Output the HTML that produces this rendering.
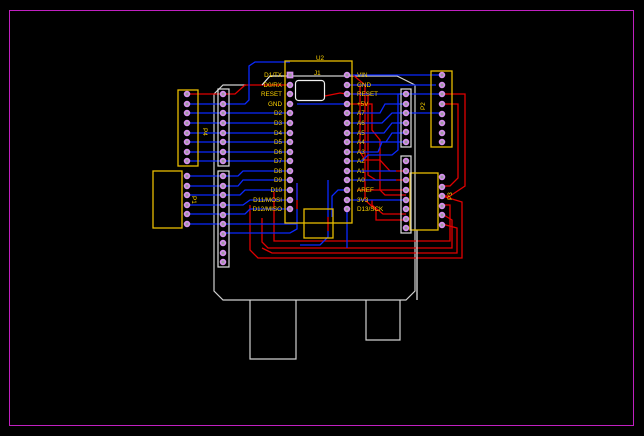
<!DOCTYPE html>
<html><head><style>
html,body{margin:0;padding:0;background:#000;}
svg{display:block}
text{font-family:"Liberation Sans",sans-serif;font-size:6.3px;fill:#ffd400;}
</style></head><body>
<svg width="644" height="436" viewBox="0 0 644 436" xmlns="http://www.w3.org/2000/svg">
<rect x="0" y="0" width="644" height="436" fill="#000"/>
<rect x="9.5" y="10.5" width="624" height="415" fill="none" stroke="#c020c0" stroke-width="1"/>

<g fill="none" stroke="#d0d0d0" stroke-width="1.2">
<polyline points="246,85 223,85 214,94 214,291 223,300 406,300 415,291 415,85 397,76 285,76"/>
<polyline points="250,300 250,359 296,359 296,300"/>
<polyline points="366,300 366,340 400,340 400,300"/>
</g>

<g fill="none" stroke="#e00000" stroke-width="1.3">
<polyline points="187,94 235,94 245,85 290,85"/>
<polyline points="442,104 458,104 458,178 450,186 442,186"/>
<polyline points="442,94 465,94 465,186 450,196 442,196"/>
<polyline points="442,205 450,205 450,241 274,241 274,192"/>
<polyline points="442,214 452,220 452,248 268,248 262,242 262,218"/>
<polyline points="442,224 457,228 457,253 272,253 262,248"/>
<polyline points="442,196 462,202 462,258 258,258 250,250 250,205"/>
<polyline points="347,85 360,85 360,152 365,160 380,160 390,171 406,171"/>
<polyline points="347,94 368,94 368,175 376,180 406,180"/>
<polyline points="347,104 372,104 372,130 380,140 380,190 385,195 406,195"/>
<polyline points="357,190 406,190"/>
<polyline points="372,200 372,205 383,214 406,214"/>
<polyline points="353,75 365,85 365,200 376,210 376,220 406,220"/>
<polyline points="325,96 340,93 347,94"/>
<line x1="297" y1="183" x2="297" y2="209"/>
<line x1="328" y1="217" x2="328" y2="231"/>
</g>

<g fill="none" stroke="#0a28ff" stroke-width="1.3">
<polyline points="223,104 245,104 249,100 249,66 255,62 290,62"/>
<line x1="187" y1="104" x2="223" y2="104"/>
<line x1="187" y1="113" x2="290" y2="113"/>
<line x1="187" y1="123" x2="290" y2="123"/>
<line x1="187" y1="133" x2="290" y2="133"/>
<line x1="187" y1="142" x2="290" y2="142"/>
<line x1="187" y1="152" x2="290" y2="152"/>
<line x1="187" y1="161" x2="290" y2="161"/>
<line x1="187" y1="176" x2="223" y2="176"/>
<line x1="187" y1="186" x2="223" y2="186"/>
<line x1="187" y1="195" x2="223" y2="195"/>
<line x1="187" y1="205" x2="223" y2="205"/>
<line x1="187" y1="214" x2="223" y2="214"/>
<line x1="187" y1="224" x2="297" y2="224"/>
<polyline points="223,176 238,176 243,171 290,171"/>
<polyline points="223,186 238,186 243,180 290,180"/>
<polyline points="223,195 240,195 245,190 290,190"/>
<polyline points="223,205 243,205 250,200 290,200"/>
<polyline points="223,214 245,214 250,209 290,209"/>
<polyline points="297,183 297,200"/>
<polyline points="223,233 290,233 297,229 297,209"/>
<polyline points="328,180 328,217"/>
<polyline points="300,245 320,245 328,237 328,231"/>
<polyline points="297,104 347,104"/>
<polyline points="347,75 442,75"/>
<polyline points="347,85 436,85"/>
<polyline points="347,94 442,94"/>
<polyline points="347,113 380,113 385,104 406,104"/>
<polyline points="347,123 382,123 392,113 406,113"/>
<polyline points="347,133 384,133 392,123 406,123"/>
<polyline points="347,142 386,142 392,133 406,133"/>
<polyline points="347,152 378,152 382,142 406,142"/>
<polyline points="347,161 362,161 368,155 392,155 398,150 398,94 406,94"/>
<polyline points="347,171 396,171"/>
<polyline points="347,180 396,180"/>
<polyline points="347,200 406,200"/>
<polyline points="347,190 338,190 332,196 332,217"/>
<line x1="347" y1="209" x2="347" y2="248"/>
<line x1="406" y1="113" x2="442" y2="113"/>
</g>

<polyline points="262,85 270,76 285,76" fill="none" stroke="#f0f0f0" stroke-width="1.2"/>
<line x1="417" y1="230" x2="417" y2="300" stroke="#f0f0f0" stroke-width="1.2"/>

<g fill="none" stroke="#e8bc00" stroke-width="1.3">
<rect x="285" y="61" width="67" height="162"/>
<rect x="178" y="90" width="20" height="76"/>
<rect x="153" y="171" width="29" height="57"/>
<rect x="431" y="71" width="21" height="76"/>
<rect x="410" y="173" width="28" height="57"/>
<rect x="304" y="209" width="29" height="29"/>
</g>
<rect x="295.5" y="80.5" width="29" height="20" rx="3" fill="none" stroke="#f0f0f0" stroke-width="1.2"/>

<g fill="none" stroke="#e0e0e0" stroke-width="1.2">
<rect x="218" y="89" width="11" height="77"/>
<rect x="218" y="171" width="11" height="96"/>
<rect x="401" y="89" width="10" height="58"/>
<rect x="401" y="156" width="10" height="77"/>
</g>

<g text-anchor="end">
<text x="282" y="77">D1/TX</text><text x="282" y="87">D0/RX</text><text x="282" y="96">RESET</text>
<text x="282" y="106">GND</text><text x="282" y="115">D2</text><text x="282" y="125">D3</text>
<text x="282" y="135">D4</text><text x="282" y="144">D5</text><text x="282" y="154">D6</text>
<text x="282" y="163">D7</text><text x="282" y="173">D8</text><text x="282" y="182">D9</text>
<text x="282" y="192">D10</text><text x="282" y="202">D11/MOSI</text><text x="282" y="211">D12/MISO</text>
</g>
<g>
<text x="357" y="77">VIN</text><text x="357" y="87">GND</text><text x="357" y="96">RESET</text>
<text x="357" y="106">+5V</text><text x="357" y="115">A7</text><text x="357" y="125">A6</text>
<text x="357" y="135">A5</text><text x="357" y="144">A4</text><text x="357" y="154">A3</text>
<text x="357" y="163">A2</text><text x="357" y="173">A1</text><text x="357" y="182">A0</text>
<text x="357" y="192">AREF</text><text x="357" y="202">3V3</text><text x="357" y="211">D13/SCK</text>
<text x="316" y="60">U2</text><text x="314" y="75">J1</text>
</g>
<text x="0" y="0" transform="translate(203,128) rotate(90)">P4</text>
<text x="0" y="0" transform="translate(192,196) rotate(90)">P1</text>
<text x="0" y="0" transform="translate(425,110) rotate(-90)">P2</text>
<text x="0" y="0" transform="translate(452,200) rotate(-90)">P3</text>

<g fill="#9a9a9a" stroke="#d890f0" stroke-width="1.7">
<g id="jl">
<circle cx="290" cy="85" r="2.4"/><circle cx="290" cy="94" r="2.4"/><circle cx="290" cy="104" r="2.4"/>
<circle cx="290" cy="113" r="2.4"/><circle cx="290" cy="123" r="2.4"/><circle cx="290" cy="133" r="2.4"/>
<circle cx="290" cy="142" r="2.4"/><circle cx="290" cy="152" r="2.4"/><circle cx="290" cy="161" r="2.4"/>
<circle cx="290" cy="171" r="2.4"/><circle cx="290" cy="180" r="2.4"/><circle cx="290" cy="190" r="2.4"/>
<circle cx="290" cy="200" r="2.4"/><circle cx="290" cy="209" r="2.4"/>
</g>
<rect x="287.5" y="72.5" width="5" height="5"/>
<use href="#jl" x="57"/><circle cx="347" cy="75" r="2.4"/>
<g id="h8">
<circle cx="223" cy="94" r="2.4"/><circle cx="223" cy="104" r="2.4"/><circle cx="223" cy="113" r="2.4"/>
<circle cx="223" cy="123" r="2.4"/><circle cx="223" cy="133" r="2.4"/><circle cx="223" cy="142" r="2.4"/>
<circle cx="223" cy="152" r="2.4"/><circle cx="223" cy="161" r="2.4"/>
</g>
<use href="#h8" x="-36"/>
<use href="#h8" x="0" y="82"/>
<circle cx="223" cy="253" r="2.4"/><circle cx="223" cy="262" r="2.4"/>
<use href="#h8" x="183" y="67"/>
<use href="#h8" x="219" y="-19"/>
<g id="h6">
<circle cx="187" cy="176" r="2.4"/><circle cx="187" cy="186" r="2.4"/><circle cx="187" cy="195" r="2.4"/>
<circle cx="187" cy="205" r="2.4"/><circle cx="187" cy="214" r="2.4"/><circle cx="187" cy="224" r="2.4"/>
</g>
<use href="#h6" x="255" y="1"/>
<use href="#h6" x="219" y="-82"/>
</g>
</svg>
</body></html>
